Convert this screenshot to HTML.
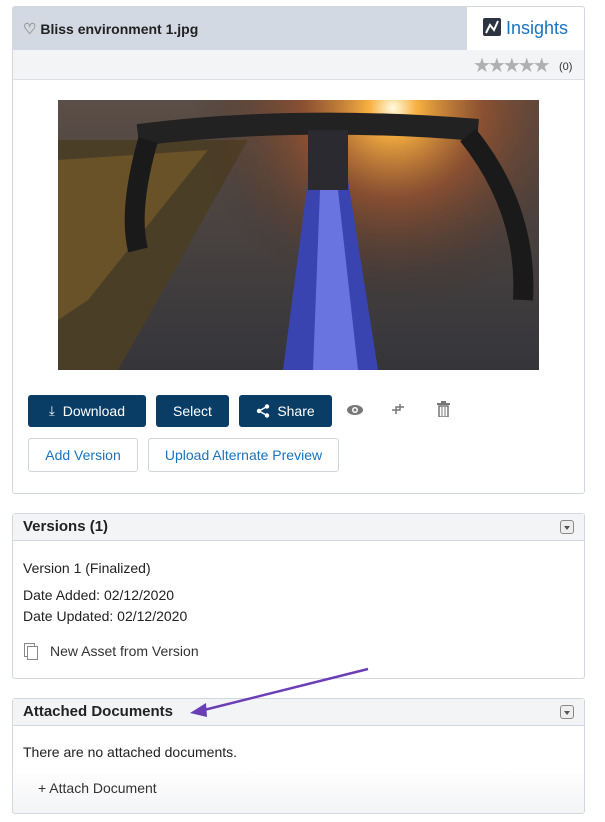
<!DOCTYPE html>
<html><head><style>
body{margin:0;width:605px;height:822px;background:#fff;font-family:"Liberation Sans",sans-serif;position:relative;overflow:hidden;color:#222}
.abs{position:absolute}
.panel{position:absolute;left:12px;width:571px;border:1px solid #d3d8e0;border-radius:3px;background:#fff}
.btn{position:absolute;height:32px;border-radius:3px;background:#0a3d66;color:#fff;font-size:14px;display:flex;align-items:center;justify-content:center}
.obtn{position:absolute;height:32px;border:1px solid #d0d5dc;border-radius:3px;background:#fff;color:#1a73c0;font-size:14px;display:flex;align-items:center;justify-content:center}
.ph{position:absolute;left:0;right:0;top:0;height:26px;background:#f3f4f6;border-bottom:1px solid #d3d8e0;font-weight:bold;font-size:15px;padding-left:10px;line-height:26px;color:#222}
.dd{position:absolute;right:10px;top:6px;width:12px;height:12px;border:1px solid #888;border-radius:3px;background:#eee}
.dd:after{content:"";position:absolute;left:3px;top:5px;border-left:3px solid transparent;border-right:3px solid transparent;border-top:4px solid #555}
.t{position:absolute;font-size:14px;color:#222}
</style></head><body>
<div class="panel" style="top:6px;height:486px">
 <div class="abs" style="left:0;top:0;width:454px;height:43px;background:#d3d9e2"></div>
 <div class="abs" style="left:10px;top:13px;font-size:14px;font-weight:bold;color:#222"><span style="color:#999;font-size:15px">♡</span> Bliss environment 1.jpg</div>
 <div class="abs" style="left:470px;top:11px;width:18px;height:18px;background:#2b3440;border-radius:2px"><svg width="18" height="18"><polyline points="3,15 7,7 11,12 15,3" fill="none" stroke="#fff" stroke-width="2"/></svg></div>
 <div class="abs" style="left:493px;top:11px;font-size:18px;color:#1a73c0">Insights</div>
 <div class="abs" style="left:0;top:43px;width:571px;height:29px;background:#f3f4f6;border-bottom:1px solid #dde1e7"></div>
 <div class="abs" style="left:460px;top:46px;font-size:20px;color:#b0b0b0;letter-spacing:-3px">★★★★★</div>
 <div class="abs" style="left:546px;top:54px;font-size:11px;color:#333">(0)</div>
 <svg class="abs" style="left:45px;top:93px" width="481" height="270">
  <defs>
   <radialGradient id="sun" cx="335" cy="8" r="200" gradientUnits="userSpaceOnUse"><stop offset="0" stop-color="#fffbe0"/><stop offset=".12" stop-color="#f7b040"/><stop offset=".45" stop-color="#a0522a" stop-opacity=".7"/><stop offset="1" stop-color="#3a2a22" stop-opacity="0"/></radialGradient>
   <linearGradient id="road" x1="0" y1="0" x2="0" y2="1"><stop offset="0" stop-color="#5b4e46"/><stop offset="1" stop-color="#35353a"/></linearGradient>
  </defs>
  <rect width="481" height="270" fill="url(#road)"/>
  <polygon points="0,40 190,40 60,270 0,270" fill="#4a3e26"/>
  <polygon points="0,60 150,50 30,200 0,220" fill="#6a5228"/>
  <rect width="481" height="270" fill="url(#sun)"/>
  <path d="M80 35 Q240 15 420 30" stroke="#222" stroke-width="22" fill="none"/>
  <path d="M90 40 Q70 110 80 150" stroke="#1a1a1a" stroke-width="20" fill="none"/>
  <path d="M410 35 Q470 110 465 200" stroke="#1a1a1a" stroke-width="20" fill="none"/>
  <polygon points="250,80 290,80 320,270 225,270" fill="#3a44b0"/>
  <polygon points="262,90 280,90 300,270 255,270" fill="#6a74e0"/>
  <rect x="250" y="30" width="40" height="60" fill="#2a2a30"/>
 </svg>
 <div class="btn" style="left:15px;top:388px;width:118px"><span style="font-size:13px;margin-right:8px">⤓</span>Download</div>
 <div class="btn" style="left:143px;top:388px;width:73px">Select</div>
 <div class="btn" style="left:226px;top:388px;width:93px"><svg width="14" height="14" style="margin-right:7px"><circle cx="11" cy="2.5" r="2.2" fill="#fff"/><circle cx="3" cy="7" r="2.2" fill="#fff"/><circle cx="11" cy="11.5" r="2.2" fill="#fff"/><path d="M11 2.5L3 7L11 11.5" stroke="#fff" stroke-width="1.5" fill="none"/></svg>Share</div>
 <svg class="abs" style="left:333px;top:397px" width="18" height="12"><ellipse cx="9" cy="6" rx="8" ry="5" fill="#777"/><circle cx="9" cy="6" r="3" fill="#fff"/><circle cx="9" cy="6" r="1.5" fill="#777"/></svg>
 <svg class="abs" style="left:378px;top:394px" width="14" height="16"><path d="M1 9H9V3M5 13V6H13" stroke="#777" stroke-width="1.5" fill="none"/></svg>
 <svg class="abs" style="left:424px;top:394px" width="13" height="16"><rect x="0" y="2" width="13" height="2" fill="#777"/><rect x="4" y="0" width="5" height="2" fill="#777"/><path d="M2 5h9v11H2z" fill="none" stroke="#777" stroke-width="1.5"/><path d="M5 6v9M8 6v9" stroke="#777"/></svg>
 <div class="obtn" style="left:15px;top:431px;width:108px">Add Version</div>
 <div class="obtn" style="left:135px;top:431px;width:189px">Upload Alternate Preview</div>
</div>
<div class="panel" style="top:513px;height:164px">
 <div class="ph">Versions (1)<div class="dd"></div></div>
 <div class="t" style="left:10px;top:46px">Version 1 (Finalized)</div>
 <div class="t" style="left:10px;top:73px">Date Added: 02/12/2020</div>
 <div class="t" style="left:10px;top:94px">Date Updated: 02/12/2020</div>
 <svg class="abs" style="left:11px;top:129px" width="14" height="17"><rect x=".5" y=".5" width="10" height="13" fill="none" stroke="#888"/><rect x="3.5" y="3.5" width="10" height="13" fill="#fff" stroke="#888"/></svg>
 <div class="t" style="left:37px;top:129px;color:#333">New Asset from Version</div>
</div>
<div class="panel" style="top:698px;height:114px;background:linear-gradient(#fff 60%,#f3f4f6)">
 <div class="ph">Attached Documents<div class="dd"></div></div>
 <div class="t" style="left:10px;top:45px">There are no attached documents.</div>
 <div class="t" style="left:25px;top:81px;color:#333">+ Attach Document</div>
</div>
<svg class="abs" style="left:0;top:0" width="605" height="822"><line x1="368" y1="669" x2="200" y2="711" stroke="#6a3fb5" stroke-width="2.5"/><polygon points="190,713 206,703 207,717" fill="#6a3fb5"/></svg>
</body></html>
